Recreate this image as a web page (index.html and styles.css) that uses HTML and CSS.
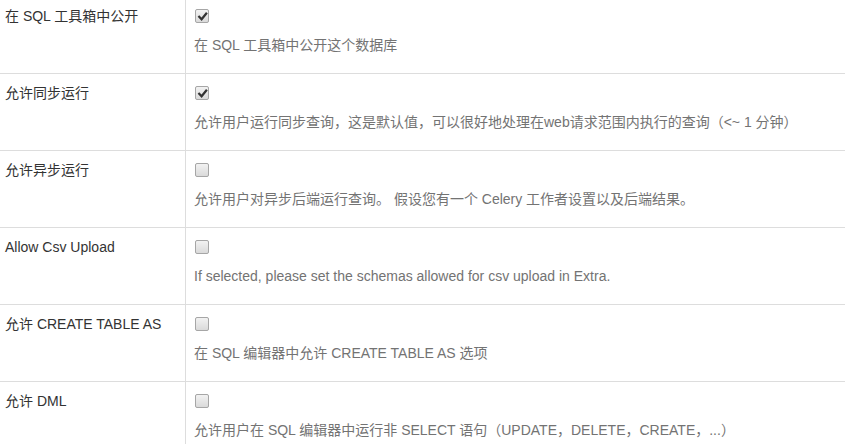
FILE: index.html
```
<!DOCTYPE html>
<html lang="zh">
<head>
<meta charset="utf-8">
<title>数据库设置</title>
<link rel="stylesheet" href="styles.css">
</head>
<body>
<table class="settings">
  <tbody>
    <tr>
      <td class="label"><div class="line">在 SQL 工具箱中公开</div></td>
      <td class="field">
        <div class="check-line"><span class="cb checked"><svg viewBox="0 0 13 13" width="13" height="13"><path d="M3.2 6.8 L5.6 9.3 L10.2 3.6" /></svg></span></div>
        <div class="help line">在 SQL 工具箱中公开这个数据库</div>
      </td>
    </tr>
    <tr>
      <td class="label"><div class="line">允许同步运行</div></td>
      <td class="field">
        <div class="check-line"><span class="cb checked"><svg viewBox="0 0 13 13" width="13" height="13"><path d="M3.2 6.8 L5.6 9.3 L10.2 3.6" /></svg></span></div>
        <div class="help line">允许用户运行同步查询，这是默认值，可以很好地处理在web请求范围内执行的查询（&lt;~ 1 分钟）</div>
      </td>
    </tr>
    <tr>
      <td class="label"><div class="line">允许异步运行</div></td>
      <td class="field">
        <div class="check-line"><span class="cb"></span></div>
        <div class="help line">允许用户对异步后端运行查询。 假设您有一个 Celery 工作者设置以及后端结果。</div>
      </td>
    </tr>
    <tr>
      <td class="label"><div class="line">Allow Csv Upload</div></td>
      <td class="field">
        <div class="check-line"><span class="cb"></span></div>
        <div class="help line">If selected, please set the schemas allowed for csv upload in Extra.</div>
      </td>
    </tr>
    <tr>
      <td class="label"><div class="line">允许 CREATE TABLE AS</div></td>
      <td class="field">
        <div class="check-line"><span class="cb"></span></div>
        <div class="help line">在 SQL 编辑器中允许 CREATE TABLE AS 选项</div>
      </td>
    </tr>
    <tr>
      <td class="label"><div class="line">允许 DML</div></td>
      <td class="field">
        <div class="check-line"><span class="cb"></span></div>
        <div class="help line">允许用户在 SQL 编辑器中运行非 SELECT 语句（UPDATE，DELETE，CREATE，...）</div>
      </td>
    </tr>
  </tbody>
</table>
</body>
</html>
```
FILE: styles.css
```
html, body {
  margin: 0;
  padding: 0;
  background: #fff;
}
body {
  font-family: "Liberation Sans", "Noto Sans CJK SC", sans-serif;
  font-size: 14px;
  line-height: 20px;
  color: #333;
  overflow: hidden;
}
.settings {
  width: 100%;
  border-collapse: collapse;
  border-spacing: 0;
}
.settings td {
  border-top: 1px solid #ddd;
  vertical-align: top;
  padding: 9px 5px 18px;
}
.settings tr:first-child td {
  border-top: 0;
  padding-top: 6px;
}
.settings td.label {
  width: 175px;
  border-right: 1px solid #ddd;
  white-space: nowrap;
}
.settings td.field {
  padding-left: 8px;
}
.line {
  height: 20px;
  overflow: visible;
  white-space: nowrap;
}
.check-line {
  box-sizing: border-box;
  height: 20px;
  padding-top: 3px;
}
.cb {
  display: block;
  box-sizing: border-box;
  width: 14px;
  height: 14px;
  margin-left: 1px;
  border: 1px solid #a6a6a6;
  border-radius: 2px;
  background: linear-gradient(#f2f2f2, #dadada);
}
.cb svg {
  display: block;
  margin: -0.5px 0 0 -0.5px;
}
.cb svg path {
  fill: none;
  stroke: #333;
  stroke-width: 2.2;
  stroke-linecap: square;
}
.help {
  margin-top: 9px;
  color: #737373;
}
```
